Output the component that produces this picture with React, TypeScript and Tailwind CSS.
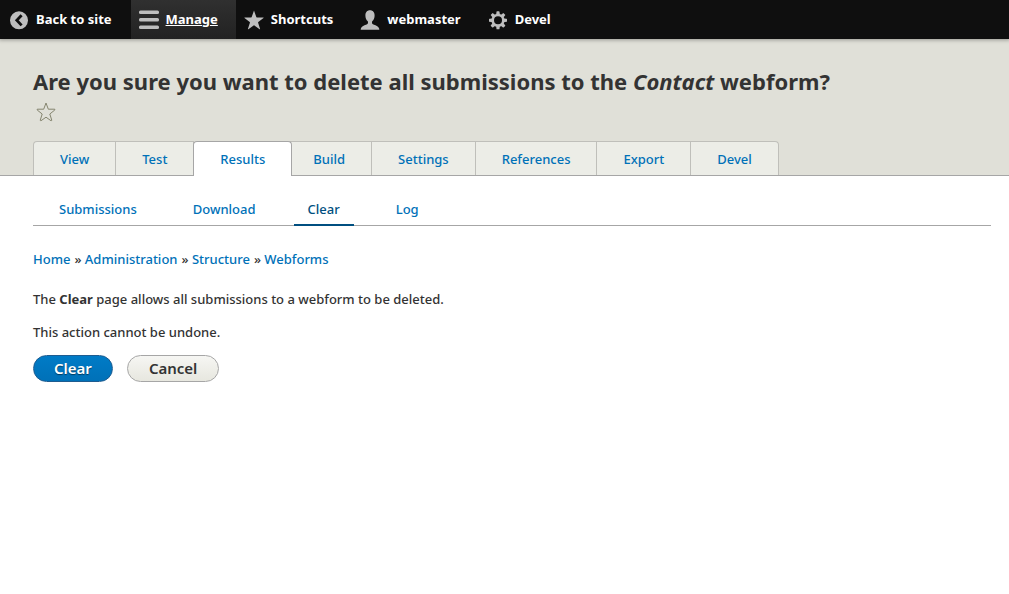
import type { ReactNode } from 'react';

const iconClass = 'size-5 shrink-0 fill-[#bebebe]';

function BackIcon() {
  return (
    <svg viewBox="0 0 20 20" className={iconClass} aria-hidden="true">
      <circle cx="10" cy="10.300" r="9" />
      <path d="M12.600 5.200L7.800 10.300L12.600 15.400" fill="none" stroke="#0f0f0f" strokeWidth="2.800" />
    </svg>
  );
}

function MenuIcon() {
  return (
    <svg viewBox="0 0 20 20" className={iconClass} aria-hidden="true">
      <rect x="0" y="0.400" width="20" height="3.600" rx="1.500" />
      <rect x="0" y="7.900" width="20" height="3.600" rx="1.500" />
      <rect x="0" y="15.500" width="20" height="3.600" rx="1.500" />
    </svg>
  );
}

function StarIcon() {
  return (
    <svg viewBox="0 0 20 20" className={iconClass} aria-hidden="true">
      <path d="M10 0.500l2.300 6.500q.1.400.6.400h6.500q.4.200.1.500l-5.200 4.100q-.3.300-.2.700l2 6.200q0 .6-.5.300l-5.200-3.800q-.4-.2-.8 0l-5.200 3.800q-.5.300-.5-.3l2-6.200q.1-.4-.2-.7L.500 7.900q-.3-.3.100-.5h6.500q.5 0 .6-.4z" />
    </svg>
  );
}

function PersonIcon() {
  return (
    <svg viewBox="0 0 20 20" className={iconClass} aria-hidden="true">
      <path d="M10 .300c-3 0-4.600 2.200-4.600 5.200c0 2.400.8 4.600 2.400 5.800c.5 1.500.2 2.700-1.200 3.300c-3 1-5.400 1.900-6 4.700q0 .4.400.4h18q.4 0 .4-.4c-.6-2.800-3-3.700-6-4.700c-1.400-.6-1.700-1.800-1.200-3.300c1.600-1.200 2.400-3.400 2.400-5.800c0-3-1.600-5.200-4.600-5.200z" />
    </svg>
  );
}

const teeth = [0, 45, 90, 135, 180, 225, 270, 315];

function GearIcon() {
  return (
    <svg viewBox="0 0 20 20" className={iconClass} aria-hidden="true">
      <circle cx="10" cy="10.300" r="5.300" fill="none" stroke="#bebebe" strokeWidth="2.600" />
      {teeth.map((angle) => (
        <path
          key={angle}
          d="M8.900 1.300h2.200q.4 0 .4.400l.4 3.300h-3.800l.4-3.300q0-.4.4-.4z"
          transform={`rotate(${angle} 10 10.300)`}
        />
      ))}
    </svg>
  );
}

interface ToolbarItem {
  label: string;
  icon: ReactNode;
  active?: boolean;
}

const toolbar: ToolbarItem[] = [
  { label: 'Back to site', icon: <BackIcon /> },
  { label: 'Manage', icon: <MenuIcon />, active: true },
  { label: 'Shortcuts', icon: <StarIcon /> },
  { label: 'webmaster', icon: <PersonIcon /> },
  { label: 'Devel', icon: <GearIcon /> },
];

const tabs = ['View', 'Test', 'Results', 'Build', 'Settings', 'References', 'Export', 'Devel'];
const subTabs = ['Submissions', 'Download', 'Clear', 'Log'];
const breadcrumb = ['Home', 'Administration', 'Structure', 'Webforms'];

function Toolbar() {
  return (
    <nav className="relative flex h-[39px] bg-[#0f0f0f] pl-px text-[13px] font-bold text-white shadow-[0_0_4px_1px_rgba(0,0,0,0.33)]">
      {toolbar.map((item) => (
        <a
          key={item.label}
          href="#"
          className={
            item.active
              ? 'flex items-center gap-[7px] bg-linear-to-b from-[#303030] to-[#222] pr-[18px] pl-2 underline'
              : 'flex items-center gap-[7px] pr-[19px] pl-2'
          }
        >
          {item.icon}
          {item.label}
        </a>
      ))}
    </nav>
  );
}

function Tabs() {
  return (
    <nav className="mt-[18px] flex border-b border-[#a6a6a6] px-[33px]">
      {tabs.map((tab) => (
        <a
          key={tab}
          href="#"
          className={
            tab === 'Results'
              ? 'z-10 -mr-1.5 -mb-px h-[35px] rounded-t border border-b-0 border-[#a6a6a6] bg-white px-[26px] leading-[35px]'
              : '-mr-px h-[34px] border border-b-0 border-[#bfbfba] bg-[#ecede7] px-[26px] leading-[35px] first:rounded-tl last:mr-0 last:rounded-tr'
          }
        >
          {tab}
        </a>
      ))}
    </nav>
  );
}

function App() {
  return (
    <div className="font-['Noto_Sans',sans-serif] text-[13px] font-medium text-[#333]">
      <Toolbar />
      <header className="bg-[#e0e0d8] pt-[26px] text-[#0071b8]">
        <h1 className="px-[33px] text-[22px] leading-[32px] font-bold text-[#333]">
          Are you sure you want to delete all submissions to the <em>Contact</em> webform?
        </h1>
        <a href="#" aria-label="Add to shortcuts" className="mx-9 mt-[5px] block size-5">
          <svg viewBox="0 0 20 20" className="size-5 fill-none stroke-[#85856f]" aria-hidden="true">
            <path
              strokeLinejoin="round"
              d="M10 1l2.300 6.200h6.500v.8l-5 4l2 6.300l-.7.500l-5.100-3.600l-5.100 3.600l-.7-.5l2-6.300l-5-4v-.8h6.500z"
            />
          </svg>
        </a>
        <div className="pt-px">
          <Tabs />
        </div>
      </header>
      <main className="px-[33px] pr-[18px] text-[#0071b8]">
        <nav className="mt-[18px] flex h-8 gap-1 border-b border-[#a6a6a6] leading-[30px]">
          {subTabs.map((tab) => (
            <a
              key={tab}
              href="#"
              className={
                tab === 'Clear'
                  ? 'mr-3 -mb-px ml-2 border-b-2 border-[#004f80] px-[14px] text-[#004f80]'
                  : 'px-[26px]'
              }
            >
              {tab}
            </a>
          ))}
        </nav>
        <nav className="mt-[23px] flex gap-1 leading-5">
          {breadcrumb.map((crumb, i) => (
            <span key={crumb}>
              {i > 0 && <span className="text-[#333]">» </span>}
              <a href="#">{crumb}</a>
            </span>
          ))}
        </nav>
        <form className="text-[#333]" onSubmit={(e) => e.preventDefault()}>
          <p className="mt-5 leading-5">
            The <strong>Clear</strong> page allows all submissions to a webform to be deleted.
          </p>
          <p className="mt-[13px] leading-5">This action cannot be undone.</p>
          <div className="mt-[13px] flex gap-[14px] text-[15px] leading-[25px] font-semibold">
            <button
              type="submit"
              className="h-[27px] rounded-full border border-[#1e5c90] bg-linear-to-b from-[#007bc6] to-[#0071b8] px-5 text-white [text-shadow:0_1px_1px_rgba(0,0,0,0.5)]"
            >
              Clear
            </button>
            <button
              type="button"
              className="h-[27px] rounded-full border border-[#a6a6a6] bg-linear-to-b from-[#f6f6f3] to-[#e7e7df] px-[21px]"
            >
              Cancel
            </button>
          </div>
        </form>
      </main>
    </div>
  );
}

export default App;
